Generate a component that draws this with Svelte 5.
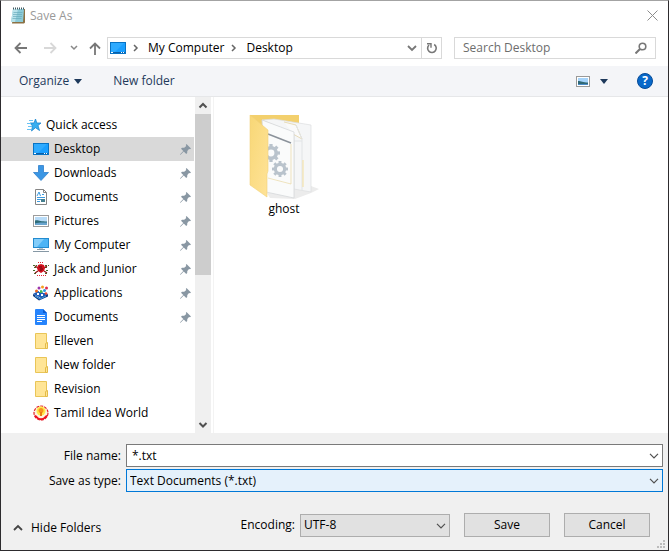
<script lang="ts">
  interface Place {
    label: string;
    icon: string;
    pinned: boolean;
  }

  const places: Place[] = [
    { label: 'Desktop', icon: 'desktop', pinned: true },
    { label: 'Downloads', icon: 'download', pinned: true },
    { label: 'Documents', icon: 'document', pinned: true },
    { label: 'Pictures', icon: 'picture', pinned: true },
    { label: 'My Computer', icon: 'computer', pinned: true },
    { label: 'Jack and Junior', icon: 'crest', pinned: true },
    { label: 'Applications', icon: 'apps', pinned: true },
    { label: 'Documents', icon: 'gdoc', pinned: true },
    { label: 'Elleven', icon: 'folder', pinned: false },
    { label: 'New folder', icon: 'folder', pinned: false },
    { label: 'Revision', icon: 'folder', pinned: false },
    { label: 'Tamil Idea World', icon: 'idea', pinned: false }
  ];

  const teeth = [0, 45, 90, 135, 180, 225, 270, 315];

  let selected = $state(0);
  let fileName = $state('*.txt');
  let fileType = $state('Text Documents (*.txt)');
  let encoding = $state('UTF-8');
  let search = $state('');
</script>

{#snippet chevron()}
  <svg class="chevron" width="10" height="6" viewBox="0 0 10 6"><path d="M1 .8 5 4.8 9 .8" fill="none" stroke="#505050" stroke-width="1.2" /></svg>
{/snippet}

{#snippet gear(x: number, y: number, r: number)}
  <g transform="translate({x} {y})" fill="#b9c3cc">
    {#each teeth as t}
      <rect x={-r * 0.18} y={-r} width={r * 0.36} height={r * 0.5} transform="rotate({t})" />
    {/each}
    <circle r={r * 0.58} fill="none" stroke="#b9c3cc" stroke-width={r * 0.4} />
  </g>
{/snippet}

{#snippet icon(name: string)}
  <svg width="16" height="16" viewBox="0 0 16 16">
    {#if name === 'desktop'}
      <rect x=".5" y="2.5" width="15" height="11" fill="#1a9fff" stroke="#0873c4" />
      <path d="M1 3h13L5 12H1z" fill="#2fabff" />
      <path d="M1 12.5h14" stroke="#0a5fa8" />
      <path d="M1 12.5h2M11 12.5h1M13 12.5h1" stroke="#fff" />
    {:else if name === 'download'}
      <path d="M5.5.5h5v7h5L8 15.5.5 7.5h5z" fill="#3a96e4" stroke="#2f7fcb" stroke-width=".8" />
    {:else if name === 'document'}
      <path d="M2.5.5h8l3 3v12h-11z" fill="#fff" stroke="#858585" />
      <path d="M10.5.5v3h3" fill="none" stroke="#858585" />
      <path d="M4 7l2-4 1.5 4M9 5.5h2M4 8.5h8M4 10.5h4M4 12.5h3" fill="none" stroke="#3d9be0" />
      <rect x="8" y="10" width="4" height="3" fill="#467f8f" />
    {:else if name === 'picture'}
      <rect x=".5" y="2.5" width="15" height="11" fill="#fff" stroke="#9c9c9c" />
      <rect x="2" y="4" width="12" height="8" fill="#b9dcf8" />
      <path d="M2 7.5c3-1 5 1 12 1V12H2z" fill="#2d6b78" />
      <path d="M2 10.5c4-1.5 8-1 12-1V12H2z" fill="#6aa5cf" />
    {:else if name === 'computer'}
      <rect x=".5" y="1.5" width="15" height="9" fill="#4db4f5" stroke="#238bcf" />
      <path d="M1 2h10L4 10H1z" fill="#82cdfa" />
      <path d="M6 11h4v1.5H6z" fill="#b8c7d1" />
      <path d="M4 12.5h8M0 14.5h16" stroke="#8698a5" />
    {:else if name === 'crest'}
      <path d="M0 4.5h4M1 6.5h3M0 9.5h3M1 12.5h3M12 4.5h4M12 6.5h3M13 9.5h3M12 12.5h3" stroke="#496b2b" stroke-dasharray="2 1" />
      <path d="M2 5l3 2M14 5l-3 2M2 12l3-2M14 12l-3-2" stroke="#8c1111" stroke-width="1.2" />
      <path d="M5 4l3-1 3 1 1 3-1 3-3 2-3-2-1-3z" fill="#d3101c" />
      <path d="M8 5v5M6 6h1M9 8h1" stroke="#65080e" />
      <path d="M5 1.5h6M4 14.5h9" stroke="#dc2530" stroke-dasharray="1 1" />
    {:else if name === 'apps'}
      <path d="M0 9l5-3 10 3-7 4z" fill="#1d5ebd" />
      <path d="M0 9v2l6 4.500 9-4V9l-8 4z" fill="#123b80" />
      <path d="M2 11l5 3 6-3" fill="none" stroke="#41a2ee" />
      <circle cx="3.500" cy="6" r="1.500" fill="#f0671a" />
      <circle cx="6" cy="3" r="1.500" fill="#9b37ae" />
      <circle cx="9.500" cy="2" r="1.500" fill="#f3a01e" />
      <circle cx="13.500" cy="3" r="1.500" fill="#dd2d53" />
      <circle cx="8" cy="6.500" r="1.600" fill="#48bb51" />
      <circle cx="11.500" cy="5.500" r="1.500" fill="#2698e2" />
      <circle cx="13" cy="8.500" r="1.300" fill="#ee4930" />
      <path d="M4 8h2v2H4zM8 9h2v2H8zM6 5h1v2H6zM10 7h1v1h-1z" fill="#fff" />
    {:else if name === 'gdoc'}
      <path d="M2 1a1 1 0 0 1 1-1h7l4 4v11a1 1 0 0 1-1 1H3a1 1 0 0 1-1-1z" fill="#2684fc" />
      <path d="M10 0l4 4h-4z" fill="#0b5bd0" />
      <path d="M4 6.500h8M4 8.500h8M4 10.500h8M4 12.500h5" stroke="#fff" />
    {:else if name === 'folder'}
      <path d="M2.500.5h11v15h-11z" fill="#ffe596" stroke="#e9c557" />
      <path d="M12.500 10.500l2-1v6h-2z" fill="#ffe596" stroke="#e3bb48" />
    {:else if name === 'idea'}
      <circle cx="8" cy="8" r="7" fill="#fff4dc" stroke="#e3202a" stroke-width="1.200" stroke-dasharray="3 1" />
      <circle cx="8" cy="6" r="4.500" fill="#ffe84a" />
      <circle cx="8" cy="5.500" r="2.500" fill="#f7941d" />
      <path d="M7 7h2v4H7z" fill="#e87a15" />
      <path d="M2 10.500q6 7.500 12 0" fill="none" stroke="#f01020" stroke-width="2" />
    {/if}
  </svg>
{/snippet}

<main class="dialog">
  <header class="titlebar">
    <svg width="16" height="17" viewBox="0 0 16 17">
      <path d="M4 2h11v13.500l-1 1H2z" fill="#8b7144" />
      <path d="M3 2h11l-1 13H1z" fill="#8ccbd8" />
      <path d="M3 2h5L5 15H1z" fill="#b8e2ea" />
      <path d="M3.500 5.500h9M3 7.500h9M3 9.500h9M2.500 11.500h9" stroke="#68acbb" stroke-width=".7" />
      <path d="M3 1.500h11" stroke="#3e5961" stroke-width="2" stroke-dasharray="1 1" />
    </svg>
    <h1>Save As</h1>
    <button class="close" aria-label="Close">
      <svg width="11" height="11" viewBox="0 0 11 11"><path d="M.5.5l10 10M10.500.5l-10 10" stroke="#8c8c8c" /></svg>
    </button>
  </header>

  <nav class="navbar">
    <div class="arrows">
      <button aria-label="Back"><svg width="13" height="12" viewBox="0 0 13 12"><path d="M13 6H1.500M6.500 1l-5 5 5 5" fill="none" stroke="#777" stroke-width="1.8" /></svg></button>
      <button aria-label="Forward" disabled><svg width="13" height="12" viewBox="0 0 13 12"><path d="M0 6h11.500M6.500 1l5 5-5 5" fill="none" stroke="#d8d8d8" stroke-width="1.8" /></svg></button>
      <button class="recent" aria-label="Recent locations"><svg width="8" height="6" viewBox="0 0 8 6"><path d="M1 1l3 3 3-3" fill="none" stroke="#888" stroke-width="1.500" /></svg></button>
      <button aria-label="Up"><svg width="12" height="13" viewBox="0 0 12 13"><path d="M6 13V1.500M1 6.500l5-5 5 5" fill="none" stroke="#777" stroke-width="1.8" /></svg></button>
    </div>
    <div class="address">
      {@render icon('desktop')}
      <svg class="sep" width="6" height="8" viewBox="0 0 6 8"><path d="M1 1l3 3-3 3" fill="none" stroke="#666" stroke-width="1.500" /></svg>
      <button>My Computer</button>
      <svg class="sep" width="6" height="8" viewBox="0 0 6 8"><path d="M1 1l3 3-3 3" fill="none" stroke="#666" stroke-width="1.500" /></svg>
      <button>Desktop</button>
      <button class="history" aria-label="Previous locations"><svg width="10" height="7" viewBox="0 0 10 7"><path d="M1 1l4 4 4-4" fill="none" stroke="#777" stroke-width="1.8" /></svg></button>
      <button class="refresh" aria-label="Refresh">
        <svg width="12" height="12" viewBox="0 0 12 12"><path d="M8.200 2.500A4.300 4.300 0 1 1 3 3" fill="none" stroke="#777" stroke-width="1.600" /><path d="M1 1.800h4v4" fill="none" stroke="#777" stroke-width="1.400" /></svg>
      </button>
    </div>
    <div class="search">
      <input type="text" placeholder="Search Desktop" aria-label="Search Desktop" bind:value={search} />
      <svg width="12" height="12" viewBox="0 0 12 12"><circle cx="7.500" cy="4.500" r="3.300" fill="none" stroke="#777" stroke-width="1.600" /><path d="M5 7l-4.500 4.500" stroke="#777" stroke-width="2" /></svg>
    </div>
  </nav>

  <div class="toolbar">
    <button>Organize <svg width="8" height="5" viewBox="0 0 8 5"><path d="M0 0h8L4 5z" fill="#1e395b" /></svg></button>
    <button class="new">New folder</button>
    <button class="view" aria-label="Change your view">
      <svg width="14" height="11" viewBox="0 0 14 11">
        <rect x=".5" y=".5" width="13" height="10" fill="#fff" stroke="#999" />
        <rect x="2" y="2" width="10" height="7" fill="#a5d3fa" />
        <path d="M2 5c3 0 5 1.500 10 1.500V9H2z" fill="#2f6876" />
        <path d="M2 8h10v1H2z" fill="#4b8cc9" />
      </svg>
    </button>
    <button class="more" aria-label="More options"><svg width="8" height="5" viewBox="0 0 8 5"><path d="M0 0h8L4 5z" fill="#1e395b" /></svg></button>
    <button class="help" aria-label="Help">?</button>
  </div>

  <section class="content">
    <aside>
      <div class="group">
        <svg width="15" height="14" viewBox="0 0 15 14">
          <path d="M8.500 1l1.300 4H14l-3 2.500 1.500 5L8.500 9.700 4.500 13l1-5L3 5h4z" fill="#37aef0" stroke="#1a86cf" stroke-width=".8" />
          <path d="M2 2.500h4M0 5.500h4M1 8.500h4M0 11.500h4" stroke="#68c2f4" />
        </svg>
        Quick access
      </div>
      <ul>
        {#each places as p, i}
          <li>
            <button class="place" class:active={selected === i} onclick={() => (selected = i)}>
              {@render icon(p.icon)}
              <span>{p.label}</span>
              {#if p.pinned}
                <svg class="pin" width="11" height="11" viewBox="0 0 11 11"><path d="M6.500 0L11 4.500l-1 .8-1-.3-1.700 2L7.200 9l-1 1-2.400-2.400L.5 10.800 0 11l.4-1L3.300 7 1 4.700l1-1 2.200.1L6.300 2 5.800 1z" fill="#8997a3" /></svg>
              {/if}
            </button>
          </li>
        {/each}
      </ul>
    </aside>
    <div class="scrollbar">
      <svg width="16" height="17" viewBox="0 0 16 17"><path d="M4.500 10.500L8 7l3.500 3.500" fill="none" stroke="#505050" stroke-width="2" /></svg>
      <div class="track"><div class="thumb"></div></div>
      <svg width="16" height="16" viewBox="0 0 16 16"><path d="M4.500 6L8 9.500 11.500 6" fill="none" stroke="#505050" stroke-width="2" /></svg>
    </div>
    <div class="files">
      <button class="file">
        <svg width="70" height="88" viewBox="0 0 70 88">
          <defs>
            <linearGradient id="flap" x1="0" y1="0" x2="1" y2="1">
              <stop offset="0" stop-color="#f8d776" />
              <stop offset="1" stop-color="#ffe398" />
            </linearGradient>
          </defs>
          <path d="M18 80l44-7 8 3-8 4-16 6-25-1z" fill="#ececec" />
          <path d="M1 2h49v70H1z" fill="#f3d06d" />
          <path d="M13 7l12-1 37 6v67l-17-3V20z" fill="#f5f6f7" stroke="#dcdedf" stroke-width=".7" />
          <path d="M35 9l12 3 6 14-9-5" fill="#fafafa" stroke="#dfcf9c" stroke-width=".7" />
          <path d="M47 12l6 14v51M45 28h8" fill="none" stroke="#e1e4e6" />
          <path d="M54 47v27" stroke="#f4df9f" />
          <path d="M13 7l32 12v66l-28-6z" fill="#fafbfb" stroke="#d5d8da" stroke-width=".8" />
          <path d="M19 21l23 9" stroke="#8b929a" stroke-width="1.500" />
          <path d="M42 31v40L19 65" fill="none" stroke="#ead9a3" stroke-width=".7" />
          {@render gear(22, 40, 9)}
          {@render gear(31, 56, 8)}
          <path d="M1 2l18 15v41l-1 3v23L1 72z" fill="url(#flap)" stroke="#f1d278" stroke-width=".6" />
        </svg>
        <span>ghost</span>
      </button>
    </div>
  </section>

  <footer>
    <div class="fields">
      <label for="file-name">File name:</label>
      <div class="combo name">
        <input id="file-name" type="text" bind:value={fileName} />
        {@render chevron()}
      </div>
      <label for="file-type">Save as type:</label>
      <div class="combo type">
        <select id="file-type" bind:value={fileType}>
          <option>Text Documents (*.txt)</option>
          <option>All Files</option>
        </select>
        {@render chevron()}
      </div>
    </div>
    <div class="actions">
      <button class="hide">
        <svg width="10" height="7" viewBox="0 0 10 7"><path d="M1 6l4-4 4 4" fill="none" stroke="#444" stroke-width="1.800" /></svg>
        Hide Folders
      </button>
      <label for="encoding">Encoding:</label>
      <div class="combo encoding">
        <select id="encoding" bind:value={encoding}>
          <option>ANSI</option>
          <option>UTF-8</option>
        </select>
        {@render chevron()}
      </div>
      <button class="push">Save</button>
      <button class="push">Cancel</button>
    </div>
    <svg class="grip" width="8" height="8" viewBox="0 0 8 8"><path d="M6 0h2v2H6zM3 3h2v2H3zM6 3h2v2H6zM0 6h2v2H0zM3 6h2v2H3zM6 6h2v2H6z" fill="#bcbcbc" /></svg>
  </footer>
</main>

<style>
  :global(body) { margin: 0; }
  * { box-sizing: border-box; }
  svg { display: block; flex: none; }
  button, input, select { font: inherit; color: inherit; margin: 0; }
  button { background: none; border: none; padding: 0; display: flex; align-items: center; }

  .dialog {
    display: flex; flex-direction: column; min-height: 100vh;
    border: 1px solid #2d2b2e; border-top-color: #a3a3a3;
    background: #fff; color: #000;
    font: 12px/16px "Open Sans", "Noto Sans", sans-serif;
  }

  .titlebar { display: flex; align-items: center; gap: 4px; height: 29px; padding: 0 10px 0 9px; }
  .titlebar h1 { margin: 0; font-size: 12px; font-weight: 400; color: #999; }
  .close { margin-left: auto; }

  .navbar { display: flex; align-items: center; height: 36px; padding: 0 12px 0 13px; }
  .arrows { display: flex; align-items: center; gap: 17px; margin-right: 6px; }
  .arrows .recent { margin: 0 -6px 0 -4px; }
  .address {
    display: flex; align-items: center; flex: 1; height: 22px;
    border: 1px solid #d9d9d9; padding-left: 2px;
  }
  .address .sep { margin: 0 9px 0 7px; }
  .history { margin-left: auto; margin-right: 4px; }
  .refresh { height: 20px; width: 20px; justify-content: center; border-left: 1px solid #d9d9d9; }
  .search {
    display: flex; align-items: center; width: 202px; height: 22px;
    margin-left: 12px; padding: 0 8px; border: 1px solid #d9d9d9;
  }
  .search input { flex: 1; min-width: 0; border: none; padding: 0; outline: none; background: none; }
  .search input::placeholder { color: #6d6d6d; opacity: 1; }

  .toolbar {
    display: flex; align-items: center; height: 31px; padding: 0 15px 0 18px;
    background: #f4f5f8; border-bottom: 1px solid #e6e7e9; color: #1e395b;
  }
  .toolbar button { gap: 5px; }
  .toolbar .new { margin-left: 31px; }
  .toolbar .view { margin-left: auto; }
  .toolbar .more { margin: 0 29px 0 10px; }
  .toolbar .help {
    width: 16px; height: 16px; justify-content: center; border-radius: 50%;
    background: #0868c9; border: 1px solid #064b98; color: #fff; font-weight: 700;
  }

  .content { display: flex; flex: 1; }
  aside { width: 194px; padding: 16px 1px 8px 0; }
  .group { display: flex; align-items: center; gap: 4px; height: 24px; padding-left: 26px; }
  ul { list-style: none; margin: 0; padding: 0; }
  .place { width: 100%; height: 24px; gap: 5px; padding: 0 3px 0 32px; text-align: left; }
  .place.active { background: #d9d9d9; }
  .pin { margin-left: auto; }

  .scrollbar { display: flex; flex-direction: column; width: 16px; background: #f0f0f0; }
  .track { flex: 1; display: flex; flex-direction: column; }
  .thumb { flex: 0 0 53%; background: #cdcdcd; }
  .files { flex: 1; margin-left: 2px; padding: 16px 35px; border-left: 1px solid #f3f3f3; }
  .file { flex-direction: column; }

  footer { position: relative; background: #f0f0f0; padding: 11px 5px 13px 12px; }
  .fields {
    display: grid; grid-template-columns: 108px 1fr; gap: 2px 5px; align-items: center;
  }
  .fields label { text-align: right; }
  .combo { position: relative; height: 23px; }
  .combo input, .combo select {
    appearance: none; display: block; width: 100%; height: 100%;
    border: 1px solid #7a7a7a; border-radius: 0; outline: none;
    padding: 0 20px 0 3px; background: #fff;
  }
  .combo input { padding-left: 5px; }
  .combo.type select { border-color: #0078d7; background: #e5f1fb; }
  .combo.encoding { width: 150px; }
  .combo.encoding select { border-color: #adadad; background: #e1e1e1; }
  .combo .chevron { position: absolute; right: 4px; top: 9px; pointer-events: none; }

  .actions { display: flex; align-items: center; margin-top: 21px; padding-right: 13px; }
  .hide { gap: 8px; margin-right: auto; padding-top: 5px; }
  .actions label { margin-right: 5px; }
  .push {
    justify-content: center; width: 86px; height: 24px; margin-left: 14px;
    background: #e1e1e1; border: 1px solid #adadad;
  }
  .grip { position: absolute; right: 3px; bottom: 2px; }
</style>
